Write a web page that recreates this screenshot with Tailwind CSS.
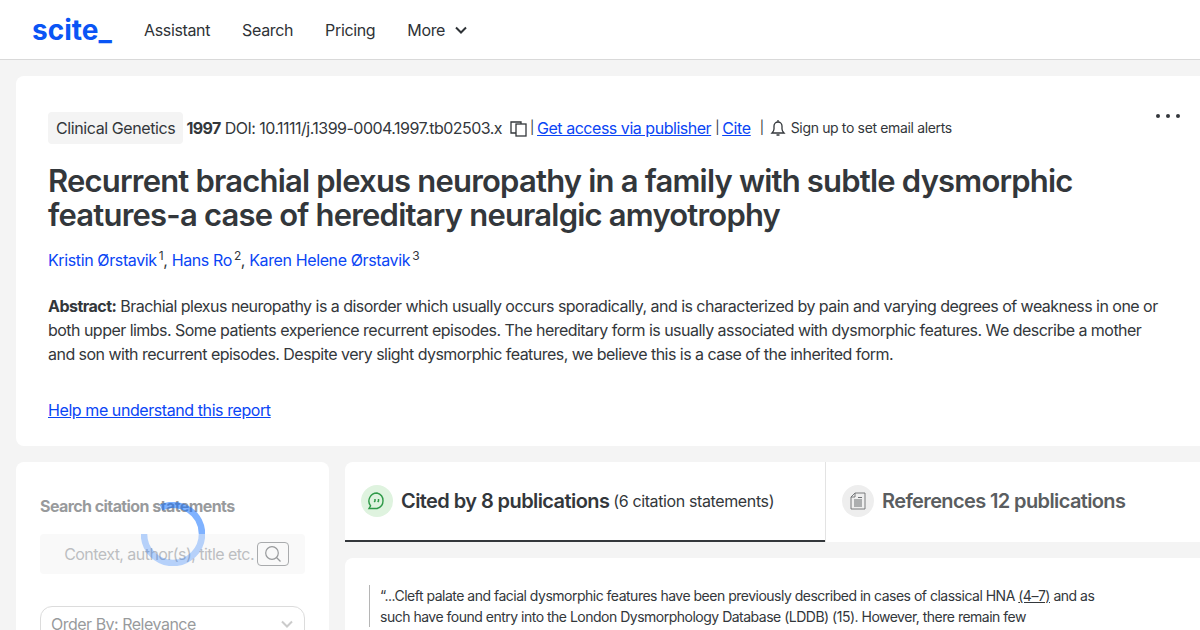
<!DOCTYPE html>
<html lang="en">
<head>
    <meta charset="UTF-8">
    <title>Recurrent brachial plexus neuropathy - scite</title>
    <script src="https://cdn.jsdelivr.net/npm/@tailwindcss/browser@4"></script>
</head>
<body class="h-[630px] overflow-hidden bg-[#f4f4f4] font-['Inter',sans-serif] text-[#33373b] tracking-[-0.35px]">
    <!-- Header -->
    <header class="h-[60px] bg-white border-b border-[#d9d9d9] flex items-center pl-8">
        <a class="font-bold text-[28px] leading-none text-[#0a55f5] w-[112px] tracking-[0px]">scite_</a>
        <nav class="flex items-center gap-8 text-base text-[#2e3236]">
            <a>Assistant</a>
            <a>Search</a>
            <a>Pricing</a>
            <a class="flex items-center gap-[9px]">More
                <svg width="14" height="14" viewBox="0 0 14 14" fill="none" stroke="#2e3236" stroke-width="2"><path d="M2 4.5l5 5 5-5"/></svg>
            </a>
        </nav>
    </header>

    <!-- Paper card -->
    <section class="relative mt-4 ml-4 h-[370px] bg-white rounded-l-lg pt-9 pl-8">
        <div class="flex items-center h-8 text-base text-[#33373b]">
            <span class="bg-[#f4f4f4] rounded px-2 h-8 flex items-center mr-[3px] tracking-[-0.4px]">Clinical Genetics</span>
            <b class="font-bold mr-1 tracking-[-0.6px]">1997</b>
            <span class="tracking-[-0.52px]">DOI: 10.1111/j.1399-0004.1997.tb02503.x</span>
            <svg class="ml-2" width="17" height="17" viewBox="0 0 17 17" fill="none" stroke="#33373b" stroke-width="1.3"><path d="M6 13H1V2h10v2"/><rect x="6" y="4" width="10" height="12"/></svg>
            <span class="mx-[3px] text-[13px]">|</span>
            <a class="text-[#0a45f5] underline tracking-[-0.47px]">Get access via publisher</a>
            <span class="ml-[4px] mr-[3px] text-[13px]">|</span>
            <a class="text-[#0a45f5] underline">Cite</a>
            <span class="ml-[9px] text-[13px]">|</span>
            <svg class="ml-[5px]" width="18" height="18" viewBox="0 0 18 18" fill="none" stroke="#33373b" stroke-width="1.3"><path d="M3 14h12c-1-1-2-2-2-4V7a4 4 0 0 0-8 0v3c0 2-1 3-2 4zM9 1v2M7.5 16h3"/></svg>
            <span class="ml-[4px] text-sm">Sign up to set email alerts</span>
        </div>
        <div class="absolute right-[20px] top-[38px] flex gap-[6px]">
            <i class="size-[4px] rounded-full bg-[#33373b]"></i>
            <i class="size-[4px] rounded-full bg-[#33373b]"></i>
            <i class="size-[4px] rounded-full bg-[#33373b]"></i>
        </div>
        <h1 class="mt-[20px] font-semibold text-[31px] leading-[34px] tracking-[-0.8px] text-[#33373b] w-[1100px]">Recurrent brachial plexus neuropathy in a family with subtle dysmorphic features-a case of hereditary neuralgic amyotrophy</h1>
        <p class="mt-4 text-base tracking-[-0.38px] text-[#0a45f5]">Kristin Ørstavik<sup class="text-[#33373b] ml-0.5">1</sup><span class="text-[#33373b]">, </span>Hans Ro<sup class="text-[#33373b] ml-0.5">2</sup><span class="text-[#33373b]">, </span>Karen Helene Ørstavik<sup class="text-[#33373b] ml-0.5">3</sup></p>
        <p class="mt-[22px] text-base leading-6 w-[1110px] tracking-[-0.53px]"><b class="font-bold">Abstract:</b> Brachial plexus neuropathy is a disorder which usually occurs sporadically, and is characterized by pain and varying degrees of weakness in one or both upper limbs. Some patients experience recurrent episodes. The hereditary form is usually associated with dysmorphic features. We describe a mother and son with recurrent episodes. Despite very slight dysmorphic features, we believe this is a case of the inherited form.</p>
        <a class="block mt-8 text-base text-[#0a45f5] underline tracking-[-0.42px]">Help me understand this report</a>
    </section>

    <div class="flex gap-4 mt-4 ml-4">
        <!-- Search sidebar -->
        <aside class="relative w-[313px] h-[300px] shrink-0 bg-white rounded-lg px-6 pt-[34px]">
            <div class="opacity-50">
                <h2 class="font-bold text-base leading-5 tracking-[-0.58px]">Search citation statements</h2>
                <div class="mt-[18px] h-10 bg-[#f4f4f4] rounded flex items-center justify-end pr-4 text-base text-[#7b7f84]">
                    <span class="mr-[3px] tracking-[-0.55px]">Context, author(s), title etc.</span>
                    <span class="w-8 h-6 border border-[#55595d] rounded-sm flex items-center justify-center">
                        <svg width="18" height="18" viewBox="0 0 18 18" fill="none" stroke="#33373b" stroke-width="1.2"><circle cx="8" cy="8" r="6.3"/><path d="M12.5 12.5l4 4"/></svg>
                    </span>
                </div>
                <div class="mt-[32px] h-9 border border-[#bbb] rounded-xl flex items-center justify-between px-[10px] text-base tracking-[-0.5px]">
                    <span>Order By: Relevance</span>
                    <svg width="14" height="14" viewBox="0 0 14 14" fill="none" stroke="#999" stroke-width="2"><path d="M2 4.5l5 5 5-5"/></svg>
                </div>
            </div>
            <svg class="absolute left-[125px] top-[40px]" width="64" height="64" viewBox="0 0 64 64" fill="none" stroke-width="6.5">
                <path d="M61 32A29 29 0 0 1 3 32" stroke="#0a6cff" stroke-opacity="0.28"/>
                <path d="M20 5.6A29 29 0 0 1 61 32" stroke="#0a6cff" stroke-opacity="0.52"/>
            </svg>
        </aside>

        <!-- Tabs and statements -->
        <main class="flex-1 min-w-0">
            <div class="flex h-20 bg-white rounded-tl-lg">
                <div class="w-[480px] flex items-center gap-[8px] pl-4 border-b-2 border-[#33373b]">
                    <span class="size-8 rounded-full bg-[#dff3df] flex items-center justify-center">
                        <svg width="20" height="20" viewBox="0 0 20 20" fill="none" stroke="#2f9a48" stroke-width="1.4"><path d="M10 2a8 8 0 0 1 0 15.5H2l1.6-2.6A8 8 0 0 1 10 2z"/><path d="M8 8v2l-.8 1M11.5 8v2l-.8 1" stroke-width="1.5"/></svg>
                    </span>
                    <span class="font-semibold text-xl tracking-[-0.58px] text-[#33373b]">Cited by 8 publications</span>
                    <span class="text-base tracking-[-0.38px] -ml-1">(6 citation statements)</span>
                </div>
                <div class="flex-1 flex items-center gap-[8px] pl-4 pb-[2px] border-l border-[#e3e3e3]">
                    <span class="size-8 rounded-full bg-[#eeeeee] flex items-center justify-center">
                        <svg width="16" height="18" viewBox="0 0 16 18" fill="none" stroke="#6b6e71" stroke-width="0.9"><path d="M5 1h10v16H1V5zM5 1v4H1"/><path d="M4 8h8M4 10h8M4 12h8M4 14h8M8 5.5h4" stroke-width="1"/></svg>
                    </span>
                    <span class="font-semibold text-xl tracking-[-0.62px] text-[#5a5d60]">References 12 publications</span>
                </div>
            </div>
            <div class="mt-4 h-[200px] bg-white rounded-tl-lg pt-[27px] pl-6">
                <blockquote class="border-l border-[#b5b5b5] pl-[10px] text-sm leading-[21px] w-[740px] tracking-[-0.5px]">“...Cleft palate and facial dysmorphic features have been previously described in cases of classical HNA <u>(4–7)</u> and as such have found entry into the London Dysmorphology Database (LDDB) (15). However, there remain few</blockquote>
            </div>
        </main>
    </div>
</body>
</html>
